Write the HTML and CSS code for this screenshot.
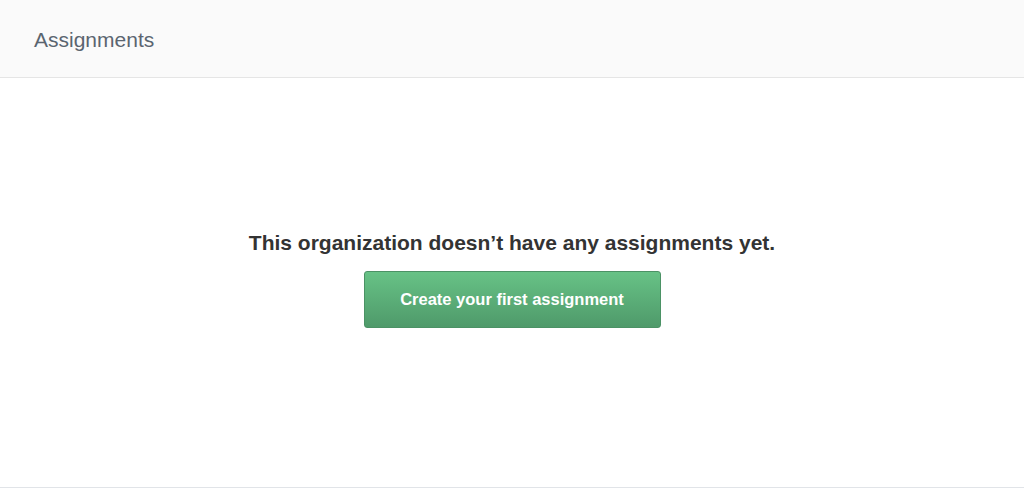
FILE: index.html
```html
<!DOCTYPE html>
<html>
<head>
<meta charset="utf-8">
<link rel="stylesheet" href="styles.css">
</head>
<body>
<div class="panel">
  <div class="panel-header">
    <h2 class="panel-title">Assignments</h2>
  </div>
  <div class="blankslate">
    <h3 class="blankslate-title">This organization doesn’t have any assignments yet.</h3>
    <a class="btn-primary" href="#">Create your first assignment</a>
  </div>
</div>
</body>
</html>
```
FILE: styles.css
```css
html, body {
  margin: 0;
  padding: 0;
  background: #fff;
}
body {
  font-family: "Liberation Sans", Arial, Helvetica, sans-serif;
  color: #333;
}
.panel {
  border-bottom: 1px solid #e1e4e8;
  height: 488px;
  box-sizing: border-box;
  display: flex;
  flex-direction: column;
}
.panel-header {
  background: #fafafa;
  border-bottom: 1px solid #e5e5e5;
  height: 78px;
  box-sizing: border-box;
  display: flex;
  align-items: center;
  padding: 0 34px;
}
.panel-title {
  margin: 0;
  font-size: 21px;
  font-weight: normal;
  color: #5a6570;
  position: relative;
  top: 1px;
}
.blankslate {
  flex: 1;
  display: flex;
  flex-direction: column;
  align-items: center;
  padding-top: 151px;
}
.blankslate-title {
  margin: 0;
  font-size: 21px;
  font-weight: bold;
  color: #333;
  line-height: 28px;
}
.btn-primary {
  margin-top: 14px;
  width: 297px;
  height: 57px;
  box-sizing: border-box;
  display: flex;
  align-items: center;
  justify-content: center;
  background-image: linear-gradient(#67c286, #4f9a6a);
  border: 1px solid #4b9265;
  border-radius: 3px;
  color: #fff;
  font-size: 16.5px;
  font-weight: bold;
  text-decoration: none;
}
```
